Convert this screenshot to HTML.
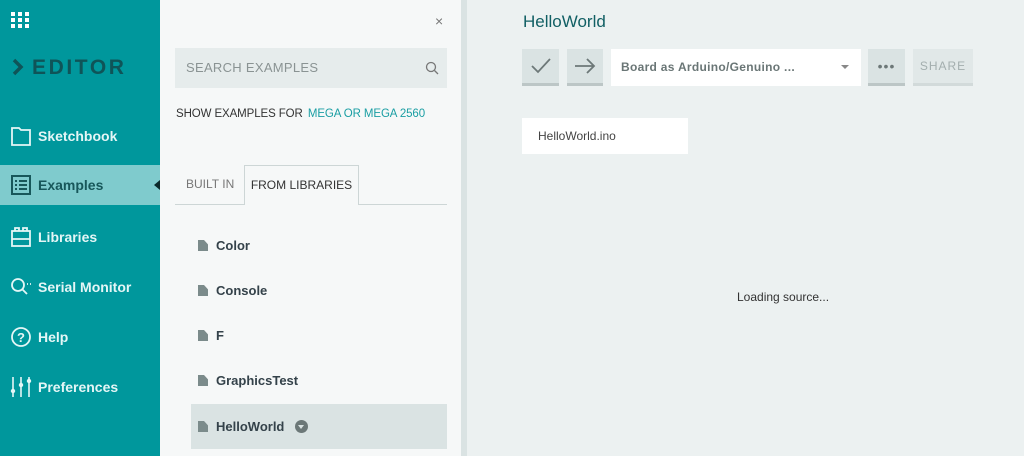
<!DOCTYPE html>
<html><head><meta charset="utf-8"><style>
*{margin:0;padding:0;box-sizing:border-box}
body{width:1024px;height:456px;overflow:hidden;font-family:"Liberation Sans",sans-serif;background:#ecf1f1;position:relative}
.sb{position:absolute;left:0;top:0;width:160px;height:456px;background:#00979c}
.nav{position:absolute;left:0;width:160px;height:40px;color:#e4f6f6;font-weight:bold;font-size:14px;line-height:40px;padding-left:38px}
.nav svg{position:absolute;left:10px;top:9px}
.act{background:#7fcbcd;color:#17575a}
.panel{position:absolute;left:160px;top:0;width:301px;height:456px;background:#f6f8f8}
.bar{position:absolute;left:461px;top:0;width:6px;height:456px;background:#dae3e3}
.item{position:absolute;left:31px;width:256px;height:45px;font-weight:bold;font-size:13px;color:#34424a;line-height:45px;padding-left:25px}
.item i{position:absolute;left:7px;top:17px;width:10px;height:11px;background:#7b8b8b;clip-path:polygon(0 0,60% 0,100% 40%,100% 100%,0 100%)}
.btn{position:absolute;top:49px;height:37px;background:#dae3e3;border-bottom:3px solid #bcc6c6}
</style></head><body>
<div class="sb">
 <svg style="position:absolute;left:11px;top:12px" width="20" height="18"><g fill="#fff"><rect x="0" y="0" width="4" height="4"/><rect x="7" y="0" width="4" height="4"/><rect x="14" y="0" width="4" height="4"/><rect x="0" y="6" width="4" height="4"/><rect x="7" y="6" width="4" height="4"/><rect x="14" y="6" width="4" height="4"/><rect x="0" y="12" width="4" height="4"/><rect x="7" y="12" width="4" height="4"/><rect x="14" y="12" width="4" height="4"/></g></svg>
 <svg style="position:absolute;left:12px;top:58px" width="12" height="18"><path d="M2 2 L9 9 L2 16" stroke="#0f5458" stroke-width="3.5" fill="none"/></svg>
 <div style="position:absolute;left:32px;top:56px;font-size:21px;letter-spacing:2.6px;color:#0f5458;font-weight:bold">EDITOR</div>
 <div class="nav" style="top:116px"><svg width="22" height="22"><path d="M2 3h7l2 2h9v15H2z" stroke="#e4f6f6" stroke-width="1.8" fill="none"/></svg>Sketchbook</div>
 <div class="nav act" style="top:165px"><svg width="22" height="22"><rect x="2" y="2" width="18" height="18" stroke="#17575a" stroke-width="2" fill="none"/><path d="M5 7h2M9 7h8M5 11h2M9 11h8M5 15h2M9 15h8" stroke="#17575a" stroke-width="2"/></svg>Examples<span style="position:absolute;left:154px;top:15px;border:5px solid transparent;border-right:6px solid #0a2a2b;border-left:0"></span></div>
 <div class="nav" style="top:217px"><svg width="22" height="22"><rect x="2" y="5" width="18" height="15" stroke="#e4f6f6" stroke-width="1.8" fill="none"/><path d="M2 13h18M5 5V2h4v3M13 5V2h4v3" stroke="#e4f6f6" stroke-width="1.8" fill="none"/></svg>Libraries</div>
 <div class="nav" style="top:267px"><svg width="24" height="22"><circle cx="8" cy="9" r="6" stroke="#e4f6f6" stroke-width="1.8" fill="none"/><path d="M12 13l5 5M17 8h1M20 8h1" stroke="#e4f6f6" stroke-width="1.8"/></svg>Serial Monitor</div>
 <div class="nav" style="top:317px"><svg width="22" height="22"><circle cx="11" cy="11" r="9" stroke="#e4f6f6" stroke-width="1.8" fill="none"/><text x="11" y="16" font-size="13" font-family="Liberation Sans" fill="#e4f6f6" text-anchor="middle" font-weight="bold">?</text></svg>Help</div>
 <div class="nav" style="top:367px"><svg width="22" height="22"><path d="M3 1v20M11 1v20M19 1v20" stroke="#e4f6f6" stroke-width="1.6"/><circle cx="3" cy="15" r="2.2" fill="#e4f6f6"/><circle cx="11" cy="9" r="2.2" fill="#e4f6f6"/><circle cx="19" cy="5" r="2.2" fill="#e4f6f6"/></svg>Preferences</div>
</div>
<div class="panel">
 <div style="position:absolute;left:275px;top:13px;font-size:14px;color:#777">×</div>
 <div style="position:absolute;left:15px;top:48px;width:272px;height:40px;background:#e6ecec;color:#8a9393;font-size:13px;line-height:40px;padding-left:11px;letter-spacing:0.3px">SEARCH EXAMPLES
  <svg style="position:absolute;left:250px;top:13px" width="14" height="14"><circle cx="6" cy="6" r="4.5" stroke="#777" stroke-width="1.3" fill="none"/><path d="M9.5 9.5l3.5 3.5" stroke="#777" stroke-width="1.3"/></svg></div>
 <div style="position:absolute;left:16px;top:108px;font-size:11.5px;color:#333;letter-spacing:-0.1px">SHOW EXAMPLES FOR <span style="color:#1a9ea3;margin-left:2px">MEGA OR MEGA 2560</span></div>
 <div style="position:absolute;left:15px;top:204px;width:272px;height:1px;background:#cdd6d6"></div>
 <div style="position:absolute;left:26px;top:177px;font-size:12px;color:#777">BUILT IN</div>
 <div style="position:absolute;left:84px;top:165px;width:115px;height:40px;border:1px solid #cdd6d6;border-bottom:none;background:#f6f8f8;font-size:12px;color:#333;line-height:38px;text-align:center">FROM LIBRARIES</div>
 <div class="item" style="top:223px"><i></i>Color</div>
 <div class="item" style="top:268px"><i></i>Console</div>
 <div class="item" style="top:313px"><i></i>F</div>
 <div class="item" style="top:358px"><i></i>GraphicsTest</div>
 <div class="item" style="top:404px;background:#dae3e3"><i></i>HelloWorld<span style="position:absolute;left:104px;top:16px;width:13px;height:13px;border-radius:50%;background:#6c7878"></span><span style="position:absolute;left:107px;top:21px;border:3.5px solid transparent;border-top:4px solid #dae3e3;border-bottom:0"></span></div>
</div>
<div class="bar"></div>
<div style="position:absolute;left:523px;top:12px;font-size:17px;color:#115f64">HelloWorld</div>
<div class="btn" style="left:522px;width:37px"><svg style="position:absolute;left:8px;top:7px" width="22" height="20"><path d="M2 10l6 6L20 3" stroke="#6d7878" stroke-width="1.8" fill="none"/></svg></div>
<div class="btn" style="left:567px;width:36px"><svg style="position:absolute;left:6px;top:7px" width="24" height="20"><path d="M2 10h19M14 3l7 7-7 7" stroke="#6d7878" stroke-width="1.8" fill="none"/></svg></div>
<div style="position:absolute;left:611px;top:49px;width:250px;height:37px;background:#fff;font-size:12px;font-weight:bold;color:#6a7676;line-height:37px;padding-left:10px;letter-spacing:0.3px">Board as Arduino/Genuino ...<span style="position:absolute;left:230px;top:16px;border:4px solid transparent;border-top:4px solid #888;border-bottom:0"></span></div>
<div class="btn" style="left:868px;width:37px;text-align:center;color:#6d7878;font-size:14px;line-height:34px;letter-spacing:1px">•••</div>
<div style="position:absolute;left:913px;top:49px;width:60px;height:37px;background:#e1e8e8;border-bottom:3px solid #d2dada;color:#a3aeae;font-size:12px;line-height:34px;text-align:center;letter-spacing:1px">SHARE</div>
<div style="position:absolute;left:522px;top:118px;width:166px;height:36px;background:#fff;font-size:12px;color:#444;line-height:36px;padding-left:16px">HelloWorld.ino</div>
<div style="position:absolute;left:737px;top:290px;font-size:12px;color:#333">Loading source...</div>
</body></html>
